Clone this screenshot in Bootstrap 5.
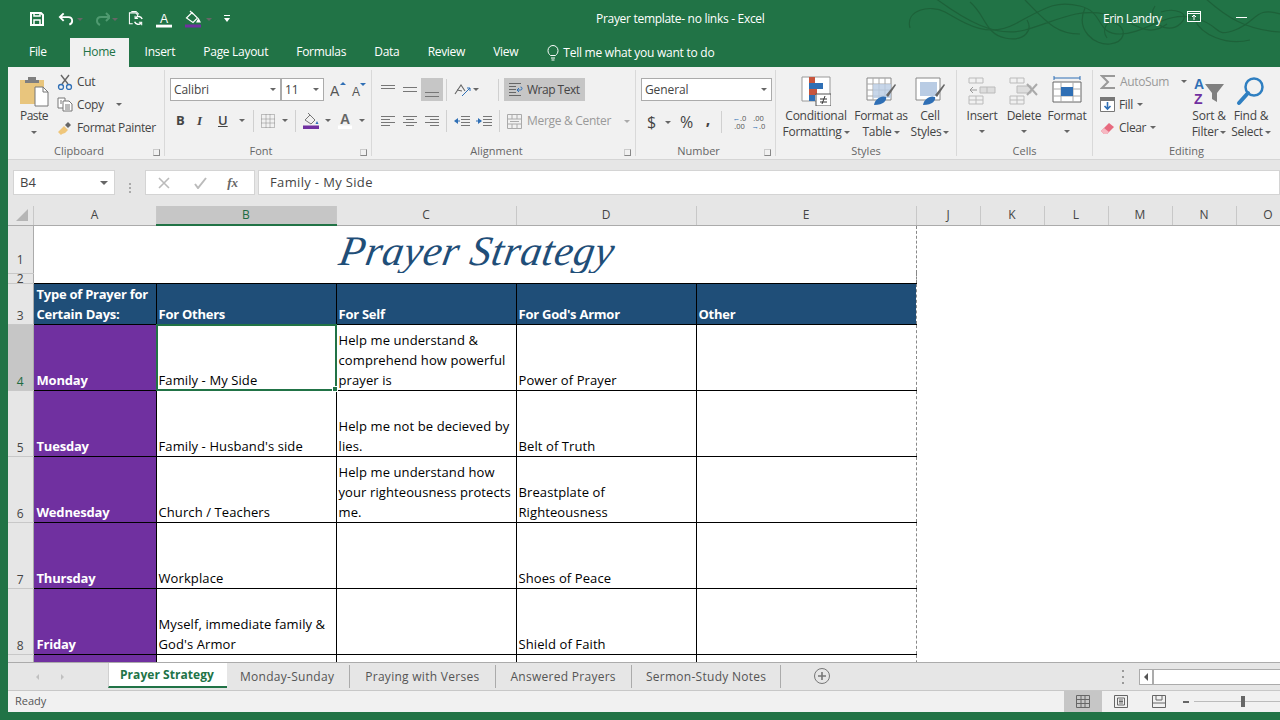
<!DOCTYPE html>
<html lang="en">
<head>
<meta charset="UTF-8">
<title>Prayer template- no links - Excel</title>
<link href="https://cdn.jsdelivr.net/npm/bootstrap@5.3.0/dist/css/bootstrap.min.css" rel="stylesheet">
<script src="https://cdn.jsdelivr.net/npm/bootstrap@5.3.0/dist/js/bootstrap.bundle.min.js"></script>
<style>
html, body { height: 720px; overflow: hidden; }
body { background: #217346; font-family: "Open Sans", sans-serif; font-size: 12px; color: #444; padding: 0 0 8px 8px; }
svg { display: block; flex: none; }
.xl-window { height: 712px; width: 1272px; overflow: hidden; }

.ml2 { margin-left: 2px; } .ml4 { margin-left: 4px; } .ml5 { margin-left: 5px; } .ml6 { margin-left: 6px; }
.ml7 { margin-left: 7px; } .ml8 { margin-left: 8px; } .ml10 { margin-left: 10px; } .ml11 { margin-left: 11px; }
.ml12 { margin-left: 12px; } .ml13 { margin-left: 13px; }

.xl-title { height: 38px; color: #fff; position: relative; margin-left: -8px; padding-left: 29px; }
.xl-flourish { position: absolute; right: 0; top: 0; }
.xl-doc { position: absolute; left: 596px; top: 10px; letter-spacing: -.3px; }
.xl-user { position: absolute; left: 1103px; top: 10px; letter-spacing: -.45px; }
.xl-share { position: absolute; left: 1187px; top: 11px; }
.xl-min { position: absolute; left: 1236px; top: 17px; width: 11px; height: 1px; background: #fff; }
.caret-w { border-top-color: #fff; }
.caret-g { border-top-color: #4f9a70; }

.xl-tabs { height: 29px; color: #fff; position: relative; }
.xl-tab { height: 29px; line-height: 28px; padding: 0 14.1px; letter-spacing: -.3px; }
.xl-tab.first { padding-left: 21px; padding-right: 23px; }
.xl-tab.on { background: #f1f1f1; color: #217346; padding: 0 13px; margin-right: 2px; }
.xl-tab.tell { letter-spacing: -.25px; padding-left: 15px; }

.xl-ribbon { height: 93px; background: #f1f1f1; border-bottom: 1px solid #d5d5d5; color: #444; }
.xl-group { position: relative; height: 86px; border-right: 1px solid #d9d9d9; margin-top: 3px; flex: none; }
.xl-label { position: absolute; left: 0; right: 0; bottom: -2px; text-align: center; font-size: 11px; color: #666; line-height: 14px; }
.xl-label.lnch { right: 14px; }
.xl-launch { position: absolute; right: 4px; bottom: 0; width: 7px; height: 7px; border: 1px solid #888; border-top-color: #ccc; border-left-color: #ccc; }
.w-clip { width: 157px; } .w-font { width: 207px; } .w-align { width: 264px; }
.w-num { width: 140px; } .w-styles { width: 181px; padding-left: 4px; } .w-cells { width: 136px; padding-left: 4px; }
.w-edit { width: 187px; border-right: 0; padding-left: 7px; }

.xl-paste { width: 38px; margin-left: 7px; padding-top: 5px; text-align: center; letter-spacing: -.5px; line-height: 15px; }
.xl-paste svg, .xl-bigbtn svg { margin: 0 auto; }
.xl-paste .xl-caret { display: block; margin: 8px auto 0; }
.xl-clipcol { margin-left: 4px; }
.xl-small { height: 23px; align-items: center; white-space: nowrap; letter-spacing: -.35px; }
.xl-caret { width: 0; height: 0; border: 3px solid transparent; border-top: 3px solid #666; border-bottom: 0; flex: none; }
.xl-bigbtn { text-align: center; line-height: 16px; padding-top: 6px; letter-spacing: -.25px; flex: none; }
.xl-bigbtn svg { margin-bottom: 2px; }
.xl-bigbtn .xl-caret { display: inline-block; vertical-align: middle; margin-left: 2px; }
.xl-bigbtn .xl-caret.solo { display: block; margin: 6px auto 0; }
.b-cond { width: 68px; margin-left: 2px; } .b-table { width: 62px; } .b-cell { width: 42px; margin-left: -3px; }
.b-ins, .b-del, .b-sort, .b-find { width: 42px; } .b-fmt { width: 44px; }
.xl-editcol { width: 88px; }
.xl-muted { color: #999; }
.xl-combo { background: #fff; border: 1px solid #ababab; height: 23px; line-height: 21px; padding-left: 3px; position: relative; flex: none; letter-spacing: -.1px; }
.xl-combo .xl-caret { position: absolute; right: 4px; top: 9px; }
.c-font { width: 111px; margin-left: 1px; } .c-size { width: 43px; } .c-gen { width: 131px; }
.xl-vsep { width: 1px; height: 22px; background: #d0d0d0; flex: none; }
.xl-hl { background: #c6c6c6; }

.row-font1 { padding: 8px 0 0 4px; }
.row-font2 { padding: 5px 0 0 11px; height: 34px; }
.row-font2 b, .row-font2 i, .row-font2 u { font-size: 13px; }
.f-b { width: 21px; } .f-i { width: 21px; font-family: "Liberation Serif", serif; font-weight: 700; } .f-u { width: 17px; font-weight: 600; }
.s-a { margin: 0 7px 0 8px; } .s-b { margin: 0 7px; }

.row-al1 { padding: 8px 0 0 5px; height: 31px; }
.row-al2 { padding: 5px 0 0 5px; height: 35px; }
.xl-slot { width: 22px; display: flex; align-items: center; justify-content: center; }
.xl-slot.low { height: 23px; align-items: flex-end; padding-bottom: 4px; }
.s-c { margin: 0 7px 0 3px; } .s-d { margin: 0 5px 0 19px; } .s-e { margin: 0 7px 0 7px; } .s-f { margin: 0 5px 0 3px; }
.xl-wraptext { width: 81px; height: 23px; letter-spacing: -.5px; padding-left: 4px; gap: 4px; }
.xl-merge { letter-spacing: -.3px; gap: 5px; }
.caret-m { border-top-color: #aaa; margin-left: 8px; }

.row-num1 { padding: 8px 0 0 5px; height: 31px; }
.row-num2 { padding: 6px 0 0 11px; height: 36px; font-size: 16px; }
.n-dol { width: 18px; } .n-car { margin-right: 9px; } .n-pct { width: 21px; }
.n-com { width: 14px; text-align: center; margin-bottom: 6px; }
.n-dec { font-size: 7.5px; line-height: 8px; width: 19px; color: #555; text-align: center; }
.n-dec em { font-style: normal; color: #2f6fb5; }
.s-g { margin: 0 8px 0 6px; }

.xl-fbar { height: 46px; background: #e6e6e6; padding: 10px 0 0 5px; }
.xl-box { height: 25px; background: #fff; border: 1px solid #d4d4d4; line-height: 23px; font-size: 13px; color: #444; }
.xl-namebox { width: 102px; padding-left: 6px; position: relative; }
.xl-namebox .xl-caret { position: absolute; right: 6px; top: 10px; border-width: 4px; border-bottom: 0; }
.xl-grip { width: 30px; padding-left: 14px; }
.xl-fx { width: 110px; padding-left: 12px; }
.xl-fx .tick { margin-left: 24px; }
.xl-fx i { margin: 0 16px 0 auto; font-family: "Liberation Serif", serif; color: #666; font-weight: 700; }
.xl-formula { flex: 1; margin-left: 3px; padding-left: 11px; letter-spacing: .35px; }

.xl-wrap { height: 456px; overflow: hidden; }
.xl-sheet { border-collapse: collapse; table-layout: fixed; width: 1289px; font-size: 13px; background: #fff; color: #000; }
.xl-sheet col.rh { width: 25px; } .xl-sheet col.ca { width: 123px; } .xl-sheet col.cb { width: 180px; }
.xl-sheet col.ce { width: 220px; } .xl-sheet col.cj { width: 64px; }
.xl-sheet th { background: #e6e6e6; font-weight: 400; text-align: center; color: #444; font-size: 12px; border-right: 1px solid #c8c8c8; border-bottom: 1px solid #ababab; padding: 0; line-height: 16px; overflow: hidden; }
.xl-sheet tr.heads th { height: 19px; }
.xl-sheet th.rn { border-bottom: 1px solid #c8c8c8; border-right: 1px solid #ababab; vertical-align: bottom; line-height: 15px; padding-bottom: 1px; }
.xl-sheet th.sel { background: #c6c6c6; color: #1e6b41; border-bottom: 2px solid #217346; }
.xl-sheet th.rn.selr { background: #c6c6c6; color: #1e6b41; }
.xl-sheet td { padding: 0 2px; vertical-align: bottom; line-height: 20px; letter-spacing: .1px; border-bottom: 1px solid #000; border-right: 1px solid #000; overflow: hidden; }
.xl-sheet td.hd { background: #1f4e78; color: #fff; font-weight: 700; letter-spacing: -.25px; }
.xl-sheet td.day { background: #7030a0; color: #fff; font-weight: 700; letter-spacing: -.2px; }
.xl-sheet td.cola { padding-left: 3px; }
.xl-sheet td.blank { border: 0; }
.xl-sheet td.edge { border-right: 1px dashed #888; }
.xl-sheet td.open { border-bottom: 0; }
.xl-sheet td.cur { position: relative; overflow: visible; }
.xl-cursor { position: absolute; left: -1px; right: -1px; top: -1px; bottom: -1px; border: 2px solid #217346; z-index: 2; }
.xl-handle { position: absolute; right: -3px; bottom: -3px; width: 6px; height: 6px; background: #217346; border: 1px solid #fff; }
.r1 { height: 47px; } .r2 { height: 10px; } .r3 { height: 40px; } .rb { height: 66px; } .r9 { height: 20px; }
.xl-sheet .r1 th.rn { padding-bottom: 6px; }
.xl-sheet .r2 th.rn { line-height: 9px; padding: 0; vertical-align: top; }
.xl-sheet td.xl-head-title { font-family: "Liberation Serif", serif; font-style: italic; font-size: 42px; color: #1f4e78; text-align: center; vertical-align: middle; letter-spacing: .5px; line-height: 43px; padding: 4px 0 0 6px; }
.xl-head-title span { display: inline-block; transform: skewX(-10deg); }

.xl-sheets { height: 28px; background: #e6e6e6; border-top: 1px solid #ababab; }
.xl-arrows { width: 100px; padding-left: 28px; gap: 22px; }
.xl-tri { width: 0; height: 0; border: 3px solid transparent; }
.tri-l { border-right-color: #c0c0c0; border-left: 0; }
.tri-r { border-left-color: #c0c0c0; border-right: 0; }
.tri-s { border: 4px solid transparent; border-right-color: #555; border-left: 0; }
.xl-stab { height: 23px; line-height: 23px; padding: 0 14px; color: #555; border-right: 1px solid #ababab; margin-top: 2px; letter-spacing: .28px; }
.xl-stab.on { background: #fff; color: #217346; font-weight: 700; height: 25px; line-height: 24px; margin-top: 0; padding: 0 11px; border-bottom: 2px solid #217346; border-left: 1px solid #d0d0d0; border-right: 0; letter-spacing: .05px; width: 119px; }
.xl-stab.t2 { padding: 0 15px 0 13px; }
.xl-stab.t3 { padding: 0 16px 0 15px; }
.xl-stab.t4 { padding: 0 15px 0 14px; }
.xl-add { margin: 4px 0 0 32px; }
.xl-tail { margin-left: auto; gap: 15px; }
.xl-scroll { width: 141px; height: 16px; background: #fff; border: 1px solid #ababab; border-right: 0; }
.xl-sbtn { width: 14px; height: 14px; border-right: 2px solid #ababab; display: flex; align-items: center; justify-content: center; }
.xl-status { height: 22px; background: #f1f1f1; border-top: 1px solid #c8c8c8; font-size: 11px; color: #555; padding-left: 7px; }
.xl-vbtn { width: 38px; height: 21px; }
.xl-views { margin-left: auto; width: 216px; }
.z-minus { width: 6px; height: 2px; background: #666; margin-left: 5px; }
.z-line { flex: 1; height: 1px; background: #bbb; margin-left: 5px; }
.z-thumb { width: 4px; height: 11px; background: #666; margin-left: 47px; flex: none; }
</style>
</head>
<body>
<div class="xl-window">

  <div class="xl-title d-flex align-items-center">
    <svg class="xl-flourish" width="375" height="50" fill="none" stroke="#1d6139" stroke-width="1.2">
      <path d="M5 28C0 10 25 4 40 12S80 40 110 24 150 0 175 6 190 34 215 34 262 10 290 18 308 38 330 30 350 6 375 14"/>
      <path d="M30 -2C60 20 90 38 120 30S170 8 200 14 240 40 262 24M120 0C140 20 150 34 175 34M250 6C240 20 262 36 275 24S268 8 256 12M300 -2C320 16 340 30 375 32"/>
      <path d="M65 2C80 14 80 34 100 38S128 30 122 20M180 8C170 30 190 46 205 44S222 30 212 24 196 30 202 38M290 20C296 34 320 46 345 40"/>
    </svg>
    <svg width="16" height="16" viewBox="0 0 16 16" fill="none" stroke="#fff" stroke-width="2"><path d="M2 2h10l2 2v10H2z"/><path d="M5 2v3h6V2M5 14V9h6v5" stroke-width="1.5"/></svg>
    <svg class="ml13" width="17" height="14" viewBox="0 0 18 14" fill="none" stroke="#fff" stroke-width="2"><path d="M6 1L2 5l4 4M2 5h9c3 0 4 2 4 4s-1 3-3 4"/></svg>
    <span class="xl-caret caret-w ml2"></span>
    <svg class="ml11" width="16" height="14" viewBox="0 0 16 14" fill="none" stroke="#4f9a70" stroke-width="2"><path d="M12 1l4 4-4 4M15 5H7C4 5 3 7 3 9s1 3 3 4"/></svg>
    <span class="xl-caret caret-g ml2"></span>
    <svg class="ml10" width="17" height="18" viewBox="0 0 18 18" fill="none" stroke="#fff" stroke-width="1.1"><path d="M5 14H1.500V2.500H8l2 2v2M3.500 1h5l3 3"/><path d="M15 9a4 4 0 0 0-7-1M7 12a4 4 0 0 0 7 1" stroke-width="1.5"/><path d="M7.500 5.500v3h3M14.500 15.500v-3h-3"/></svg>
    <svg class="ml11" width="16" height="17" viewBox="0 0 17 17"><text x="8.500" y="12" text-anchor="middle" font-size="13" font-family="Liberation Sans" fill="#fff">A</text><rect y="14" width="17" height="3" fill="#fff"/></svg>
    <svg class="ml13" width="17" height="18" viewBox="0 0 17 18" fill="none" stroke="#fff" stroke-width="1.2"><path d="M1.500 8L7 2.500l5.500 5.500L8 12.500z"/><path d="M5 1l3 3"/><path d="M13.500 9l1.500 3h-3z" fill="#fff"/><rect y="14.500" width="16" height="3" fill="#7030a0" stroke="none"/></svg>
    <span class="xl-caret caret-w ml4"></span>
    <svg class="ml12" width="6" height="8" viewBox="0 0 6 8" fill="#fff"><rect width="6" height="1"/><path d="M0 3h6L3 7z"/></svg>
    <span class="xl-doc">Prayer template- no links - Excel</span>
    <span class="xl-user">Erin Landry</span>
    <svg class="xl-share" width="14" height="12" viewBox="0 0 14 12" fill="none" stroke="#fff"><rect x=".5" y=".5" width="13" height="10"/><path d="M.5 2.500h13M7 9V4.500M5 6l2-2 2 2"/></svg>
    <span class="xl-min"></span>
  </div>

  <div class="xl-tabs d-flex">
    <div class="xl-tab first">File</div>
    <div class="xl-tab on">Home</div>
    <div class="xl-tab">Insert</div>
    <div class="xl-tab">Page Layout</div>
    <div class="xl-tab">Formulas</div>
    <div class="xl-tab">Data</div>
    <div class="xl-tab">Review</div>
    <div class="xl-tab">View</div>
    <div class="xl-tab tell d-flex align-items-center gap-1">
      <svg width="12" height="16" viewBox="0 0 12 16" fill="none" stroke="#fff"><path d="M3.500 10.500C2 9 1 8 1 5.500a5 5 0 0 1 10 0c0 2.500-1 3.500-2.500 5zM4 13h4M4.500 15h3"/></svg>
      <span>Tell me what you want to do</span>
    </div>
  </div>

  <div class="xl-ribbon d-flex">
    <!-- Clipboard -->
    <div class="xl-group w-clip d-flex">
      <div class="xl-paste">
        <svg width="30" height="33" viewBox="0 0 30 33"><rect x="1" y="5" width="24" height="24" fill="#e8c57d"/><path d="M9 2h8v3h3v3H6V5h3z" fill="#7f7f7f"/><path d="M16 12h8l5 5v14H16z" fill="#fff" stroke="#777"/><path d="M24 12v5h5" fill="none" stroke="#777"/></svg>
        <div>Paste</div>
        <span class="xl-caret"></span>
      </div>
      <div class="xl-clipcol">
        <div class="xl-small d-flex gap-1">
          <svg width="16" height="16" viewBox="0 0 16 16" fill="none"><path d="M4 1l7 9M12 1L5 10" stroke="#666" stroke-width="1.4"/><circle cx="4" cy="13" r="2.500" stroke="#2f6fb5" stroke-width="1.3"/><circle cx="12" cy="13" r="2.500" stroke="#2f6fb5" stroke-width="1.3"/></svg>
          <span>Cut</span>
        </div>
        <div class="xl-small d-flex gap-1">
          <svg width="16" height="15" viewBox="0 0 16 15" fill="#fff" stroke="#777"><path d="M1 1h7v10H1z"/><path d="M6 4h6l3 3v7H6z"/><path d="M8 8h5M8 10h5M8 12h5M3 4h2M3 6h2" fill="none"/></svg>
          <span>Copy</span><span class="xl-caret ms-2"></span>
        </div>
        <div class="xl-small d-flex gap-1">
          <svg width="16" height="16" viewBox="0 0 16 16"><path d="M1 12l6-6 4 4-3 3-3 1-1 1z" fill="#efc67a"/><path d="M8 5l3-3 3 3-3 3z" fill="#666"/></svg>
          <span>Format Painter</span>
        </div>
      </div>
      <div class="xl-label lnch">Clipboard</div><span class="xl-launch"></span>
    </div>

    <!-- Font -->
    <div class="xl-group w-font">
      <div class="row-font1 d-flex align-items-center">
        <div class="xl-combo c-font">Calibri<span class="xl-caret"></span></div>
        <div class="xl-combo c-size">11<span class="xl-caret"></span></div>
        <svg class="ml6" width="18" height="18" viewBox="0 0 18 18"><text x="0" y="15" font-size="14" font-family="Liberation Sans" fill="#555">A</text><path d="M10 4l3-3 3 3z" fill="#2f6fb5"/></svg>
        <svg class="ml2" width="18" height="18" viewBox="0 0 18 18"><text x="2" y="15" font-size="12" font-family="Liberation Sans" fill="#555">A</text><path d="M10 2h6l-3 3z" fill="#2f6fb5"/></svg>
      </div>
      <div class="row-font2 d-flex align-items-center">
        <b class="f-b">B</b>
        <i class="f-i">I</i>
        <u class="f-u">U</u>
        <span class="xl-caret ml4"></span>
        <span class="xl-vsep s-a"></span>
        <svg width="14" height="14" viewBox="0 0 14 14" fill="none" stroke="#888" stroke-dasharray="1 1"><path d="M.5.500h13v13H.5zM5 .5v13M9 .5v13M.5 5h13M.5 9h13"/></svg>
        <span class="xl-caret ml7"></span>
        <span class="xl-vsep s-b"></span>
        <svg width="17" height="17" viewBox="0 0 17 17" fill="none" stroke="#777"><path d="M2 8l5-5 5 5-4 4z"/><path d="M5 1l3 3"/><path d="M14 9l1.500 3h-3z" fill="#2f6fb5" stroke="none"/><rect y="13.500" width="16" height="3.500" fill="#7030a0" stroke="none"/></svg>
        <span class="xl-caret ml5"></span>
        <svg class="ml7" width="14" height="17" viewBox="0 0 14 17"><text x="7" y="12" text-anchor="middle" font-size="14" font-weight="700" font-family="Liberation Sans" fill="#666">A</text><rect y="13.500" width="14" height="3.500" fill="#fff"/></svg>
        <span class="xl-caret ml7"></span>
      </div>
      <div class="xl-label lnch">Font</div><span class="xl-launch"></span>
    </div>

    <!-- Alignment -->
    <div class="xl-group w-align">
      <div class="row-al1 d-flex align-items-center">
        <span class="xl-slot"><svg width="14" height="10" viewBox="0 0 14 10" stroke="#777"><path d="M0 .5h14M0 3.500h14"/></svg></span>
        <span class="xl-slot"><svg width="14" height="8" viewBox="0 0 14 8" stroke="#777"><path d="M0 1.500h14M0 5.500h14"/></svg></span>
        <span class="xl-slot low xl-hl"><svg width="14" height="6" viewBox="0 0 14 6" stroke="#777"><path d="M0 1.500h14M0 5.500h14"/></svg></span>
        <span class="xl-vsep s-c"></span>
        <svg width="17" height="15" viewBox="0 0 17 15" fill="none" stroke="#666"><path d="M1 12l6-9 4 6M3 8l5 1" stroke-width="1.1"/><path d="M8 14l8-8M13 6h3v3" stroke="#2f6fb5"/></svg>
        <span class="xl-caret ml2"></span>
        <span class="xl-vsep s-d"></span>
        <span class="xl-hl xl-wraptext d-flex align-items-center">
          <svg width="15" height="15" viewBox="0 0 15 15" fill="none" stroke="#666"><path d="M1 1.500h12M1 4.500h7M1 7.500h7M1 10.500h7M1 13.500h12"/><path d="M9 8h3.500a1.500 1.500 0 0 0 0-3M9 8l2-2M9 8l2 2" stroke="#2f6fb5"/></svg>Wrap Text</span>
      </div>
      <div class="row-al2 d-flex align-items-center">
        <span class="xl-slot"><svg width="14" height="10" viewBox="0 0 14 10" stroke="#777"><path d="M0 .5h14M0 3.500h9M0 6.500h14M0 9.500h9"/></svg></span>
        <span class="xl-slot"><svg width="14" height="10" viewBox="0 0 14 10" stroke="#777"><path d="M0 .5h14M3 3.500h8M0 6.500h14M3 9.500h8"/></svg></span>
        <span class="xl-slot"><svg width="14" height="10" viewBox="0 0 14 10" stroke="#777"><path d="M0 .5h14M5 3.500h9M0 6.500h14M5 9.500h9"/></svg></span>
        <span class="xl-vsep s-f"></span>
        <svg class="ml2" width="16" height="12" viewBox="0 0 16 12" fill="none"><path d="M7 1.500h9M7 4.500h9M7 7.500h9M7 10.500h9" stroke="#777"/><path d="M0 6l4-3v6z" fill="#2f6fb5"/><path d="M3 6h3" stroke="#2f6fb5"/></svg>
        <svg class="ml6" width="16" height="12" viewBox="0 0 16 12" fill="none"><path d="M7 1.500h9M7 4.500h9M7 7.500h9M7 10.500h9" stroke="#777"/><path d="M6 6L2 3v6z" fill="#2f6fb5"/><path d="M0 6h3" stroke="#2f6fb5"/></svg>
        <span class="xl-vsep s-e"></span>
        <span class="xl-muted xl-merge d-flex align-items-center">
          <svg width="15" height="15" viewBox="0 0 15 15" fill="none" stroke="#aaa"><path d="M.5.500h14v14H.5zM.5 5h14M.5 10h14M5 .5V5M10 .5V5M5 10v4.500M10 10v4.500M3 7.500h9"/></svg>Merge &amp; Center<span class="xl-caret caret-m"></span></span>
      </div>
      <div class="xl-label lnch">Alignment</div><span class="xl-launch"></span>
    </div>

    <!-- Number -->
    <div class="xl-group w-num">
      <div class="row-num1"><div class="xl-combo c-gen">General<span class="xl-caret"></span></div></div>
      <div class="row-num2 d-flex align-items-center">
        <span class="n-dol">$</span><span class="xl-caret n-car"></span>
        <span class="n-pct">%</span>
        <b class="n-com">,</b>
        <span class="xl-vsep s-g"></span>
        <span class="n-dec d-flex flex-column"><span><em>&#8592;</em>.0</span><span>.00</span></span>
        <span class="n-dec d-flex flex-column"><span>.00</span><span><em>&#8594;</em>.0</span></span>
      </div>
      <div class="xl-label lnch">Number</div><span class="xl-launch"></span>
    </div>

    <!-- Styles -->
    <div class="xl-group w-styles d-flex">
      <div class="xl-bigbtn b-cond">
        <svg width="30" height="30" viewBox="0 0 30 30"><path d="M1 1h28v24H1z" fill="#fff" stroke="#999"/><path d="M8 1h6v6H8zM8 13h14v-6H8z" fill="#c8553d"/><path d="M8 7h14v6H8z" fill="#2f6fb5"/><path d="M8 13h8v6H8z" fill="#c8553d"/><path d="M8 19h6v6H8z" fill="#2f6fb5"/><rect x="15" y="18" width="15" height="12" fill="#fff" stroke="#555"/><path d="M19 23h7M19 26h7M24 20l-3 8" stroke="#333" fill="none"/></svg>
        <div>Conditional</div><div>Formatting<span class="xl-caret"></span></div>
      </div>
      <div class="xl-bigbtn b-table">
        <svg width="30" height="30" viewBox="0 0 30 30"><path d="M1 2h24v22H1z" fill="#fff" stroke="#888"/><path d="M1 8h24M1 14h24M1 20h24M7 2v22M13 2v22M19 2v22" stroke="#aaa"/><path d="M7 8h18v14H7z" fill="#b9cce4" opacity=".8"/><path d="M20 19L29 8l1 1-8 12z" fill="#666"/><path d="M8 29c1-6 7-10 12-8 1 3-2 8-12 8z" fill="#2f6fb5"/></svg>
        <div>Format as</div><div>Table<span class="xl-caret"></span></div>
      </div>
      <div class="xl-bigbtn b-cell">
        <svg width="30" height="30" viewBox="0 0 30 30"><path d="M1 2h24v22H1z" fill="#fff" stroke="#888"/><path d="M5 6h17v14H5z" fill="#b9cce4"/><path d="M20 19L29 8l1 1-8 12z" fill="#666"/><path d="M8 29c1-6 7-10 12-8 1 3-2 8-12 8z" fill="#2f6fb5"/></svg>
        <div>Cell</div><div>Styles<span class="xl-caret"></span></div>
      </div>
      <div class="xl-label">Styles</div>
    </div>

    <!-- Cells -->
    <div class="xl-group w-cells d-flex">
      <div class="xl-bigbtn b-ins">
        <svg width="28" height="30" viewBox="0 0 28 30" fill="none" stroke="#bbb"><path d="M1 2h14v5H1zM8 2v5M1 20h14v8H1zM8 20v8M1 24h14"/><path d="M12 11h15v6H12zM19 11v6" fill="#ddd"/><path d="M9 14H2M5 11l-3 3 3 3" stroke="#999"/></svg>
        <div>Insert</div><span class="xl-caret solo"></span>
      </div>
      <div class="xl-bigbtn b-del">
        <svg width="30" height="30" viewBox="0 0 30 30" fill="none" stroke="#bbb"><path d="M1 2h14v5H1zM8 2v5M1 20h14v8H1zM8 20v8M1 24h14"/><path d="M8 10h14v7H8z" fill="#ddd"/><path d="M18 8l10 11M28 8L18 19" stroke="#aaa" stroke-width="2"/></svg>
        <div>Delete</div><span class="xl-caret solo"></span>
      </div>
      <div class="xl-bigbtn b-fmt">
        <svg width="30" height="30" viewBox="0 0 30 30" fill="none" stroke="#666"><path d="M1 6h28v20H1z" fill="#fff"/><path d="M1 13h28M1 20h28M9 6v20M21 6v20" stroke="#aaa"/><rect x="9" y="11" width="12" height="9" fill="#2f6fb5" stroke="none"/><path d="M2 2h26M2 0v4M28 0v4" stroke="#2f6fb5"/></svg>
        <div>Format</div><span class="xl-caret solo"></span>
      </div>
      <div class="xl-label">Cells</div>
    </div>

    <!-- Editing -->
    <div class="xl-group w-edit d-flex">
      <div class="xl-editcol">
        <div class="xl-small d-flex gap-1 xl-muted"><svg width="16" height="16" viewBox="0 0 16 16" fill="none" stroke="#999" stroke-width="2"><path d="M15 2H2l6 6-6 6h13"/></svg><span>AutoSum</span><span class="xl-caret ms-2"></span></div>
        <div class="xl-small d-flex gap-1"><svg width="15" height="15" viewBox="0 0 15 15" fill="#fff" stroke="#777"><path d="M.5.500h14v14H.5z"/><rect x=".5" y=".5" width="14" height="3" fill="#777"/><path d="M7.500 5v7M4.500 9l3 3 3-3" stroke="#2f6fb5" stroke-width="1.6" fill="none"/></svg><span>Fill</span><span class="xl-caret"></span></div>
        <div class="xl-small d-flex gap-1"><svg width="15" height="14" viewBox="0 0 15 14"><path d="M1 10L9 2l5 4-7 7H4z" fill="#e76a7e"/><path d="M1 10l3-3 5 4-2 2H4z" fill="#f6b8c2"/></svg><span>Clear</span><span class="xl-caret"></span></div>
      </div>
      <div class="xl-bigbtn b-sort">
        <svg width="30" height="30" viewBox="0 0 30 30"><text x="0" y="13" font-size="14" font-weight="700" font-family="Liberation Sans" fill="#2f6fb5">A</text><text x="0" y="28" font-size="14" font-weight="700" font-family="Liberation Sans" fill="#7030a0">Z</text><path d="M11 8h19l-7 9v9l-5-3v-6z" fill="#808080"/></svg>
        <div>Sort &amp;</div><div>Filter<span class="xl-caret"></span></div>
      </div>
      <div class="xl-bigbtn b-find">
        <svg width="30" height="30" viewBox="0 0 30 30" fill="none"><circle cx="18" cy="11" r="8.500" stroke="#2f7fc1" stroke-width="2.5"/><path d="M12 17L3 27" stroke="#2f7fc1" stroke-width="4" stroke-linecap="round"/></svg>
        <div>Find &amp;</div><div>Select<span class="xl-caret"></span></div>
      </div>
      <div class="xl-label">Editing</div>
    </div>
  </div>

  <div class="xl-fbar d-flex">
    <div class="xl-box xl-namebox">B4<span class="xl-caret"></span></div>
    <div class="xl-grip d-flex align-items-center"><svg width="2" height="11" viewBox="0 0 2 11" fill="#aaa"><rect width="2" height="2"/><rect y="4" width="2" height="2"/><rect y="8" width="2" height="2"/></svg></div>
    <div class="xl-box xl-fx d-flex align-items-center">
      <svg width="12" height="12" viewBox="0 0 12 12" fill="none" stroke="#bbb" stroke-width="1.6"><path d="M1 1l10 10M11 1L1 11"/></svg>
      <svg class="tick" width="13" height="12" viewBox="0 0 13 12" fill="none" stroke="#bbb" stroke-width="2"><path d="M1 7l3 4 8-10"/></svg>
      <i>fx</i>
    </div>
    <div class="xl-box xl-formula">Family - My Side</div>
  </div>

  <div class="xl-wrap">
  <table class="xl-sheet">
    <colgroup><col class="rh"><col class="ca"><col class="cb"><col class="cb"><col class="cb"><col class="ce"><col class="cj"><col class="cj"><col class="cj"><col class="cj"><col class="cj"><col class="cj"></colgroup>
    <tr class="heads"><th><svg width="14" height="14" viewBox="0 0 14 14" class="ms-auto me-1"><path d="M13 1v12H1z" fill="#b5b5b5"/></svg></th><th>A</th><th class="sel">B</th><th>C</th><th>D</th><th>E</th><th>J</th><th>K</th><th>L</th><th>M</th><th>N</th><th>O</th></tr>
    <tr class="r1"><th class="rn">1</th><td colspan="5" class="xl-head-title edge open"><span>Prayer Strategy</span></td><td colspan="6" class="blank"></td></tr>
    <tr class="r2"><th class="rn">2</th><td colspan="5" class="edge"></td><td colspan="6" class="blank"></td></tr>
    <tr class="r3"><th class="rn">3</th><td class="hd cola">Type of Prayer for Certain Days:</td><td class="hd">For Others</td><td class="hd">For Self</td><td class="hd">For God's Armor</td><td class="hd edge">Other</td><td colspan="6" class="blank"></td></tr>
    <tr class="rb"><th class="rn selr">4</th><td class="day cola">Monday</td><td class="cur">Family - My Side<span class="xl-cursor"><span class="xl-handle"></span></span></td><td>Help me understand &amp; comprehend how powerful prayer is</td><td>Power of Prayer</td><td class="edge"></td><td colspan="6" class="blank"></td></tr>
    <tr class="rb"><th class="rn">5</th><td class="day cola">Tuesday</td><td>Family - Husband's side</td><td>Help me not be decieved by lies.</td><td>Belt of Truth</td><td class="edge"></td><td colspan="6" class="blank"></td></tr>
    <tr class="rb"><th class="rn">6</th><td class="day cola">Wednesday</td><td>Church / Teachers</td><td>Help me understand how your righteousness protects me.</td><td>Breastplate of Righteousness</td><td class="edge"></td><td colspan="6" class="blank"></td></tr>
    <tr class="rb"><th class="rn">7</th><td class="day cola">Thursday</td><td>Workplace</td><td></td><td>Shoes of Peace</td><td class="edge"></td><td colspan="6" class="blank"></td></tr>
    <tr class="rb"><th class="rn">8</th><td class="day cola">Friday</td><td>Myself, immediate family &amp; God's Armor</td><td></td><td>Shield of Faith</td><td class="edge"></td><td colspan="6" class="blank"></td></tr>
    <tr class="r9"><th class="rn"></th><td class="day"></td><td></td><td></td><td></td><td class="edge"></td><td colspan="6" class="blank"></td></tr>
  </table>
  </div>

  <div class="xl-sheets d-flex">
    <div class="xl-arrows d-flex align-items-center"><span class="xl-tri tri-l"></span><span class="xl-tri tri-r"></span></div>
    <div class="xl-stab on">Prayer Strategy</div>
    <div class="xl-stab t2">Monday-Sunday</div>
    <div class="xl-stab t3">Praying with Verses</div>
    <div class="xl-stab t4">Answered Prayers</div>
    <div class="xl-stab">Sermon-Study Notes</div>
    <svg class="xl-add" width="18" height="18" viewBox="0 0 18 18" fill="none" stroke="#777"><circle cx="9" cy="9" r="7.500"/><path d="M9 5v8M5 9h8" stroke-width="1.6"/></svg>
    <div class="xl-tail d-flex align-items-center">
      <svg width="2" height="14" viewBox="0 0 2 14" fill="#999"><rect width="2" height="2"/><rect y="6" width="2" height="2"/><rect y="12" width="2" height="2"/></svg>
      <div class="xl-scroll"><div class="xl-sbtn"><span class="xl-tri tri-s"></span></div></div>
    </div>
  </div>

  <div class="xl-status d-flex align-items-center">
    <span>Ready</span>
    <div class="xl-views d-flex align-items-center">
      <div class="xl-vbtn xl-hl d-flex align-items-center justify-content-center"><svg width="14" height="13" viewBox="0 0 14 13" fill="none" stroke="#666"><path d="M.5.500h13v12H.5zM.5 4.500h13M.5 8.500h13M5 .5v12M9 .5v12"/></svg></div>
      <div class="xl-vbtn d-flex align-items-center justify-content-center"><svg width="14" height="13" viewBox="0 0 14 13" fill="none" stroke="#666"><path d="M.5.500h13v12H.5zM3.500 3h7v7h-7zM5 5h4M5 6.500h4M5 8h4"/></svg></div>
      <div class="xl-vbtn d-flex align-items-center justify-content-center"><svg width="14" height="13" viewBox="0 0 14 13" fill="none" stroke="#666"><path d="M.5.500h13v12H.5zM.5 8h13M4 .5V5h6V.5"/></svg></div>
      <span class="z-minus"></span>
      <span class="z-line d-flex align-items-center"><span class="z-thumb"></span></span>
    </div>
  </div>
</div>
</body>
</html>
